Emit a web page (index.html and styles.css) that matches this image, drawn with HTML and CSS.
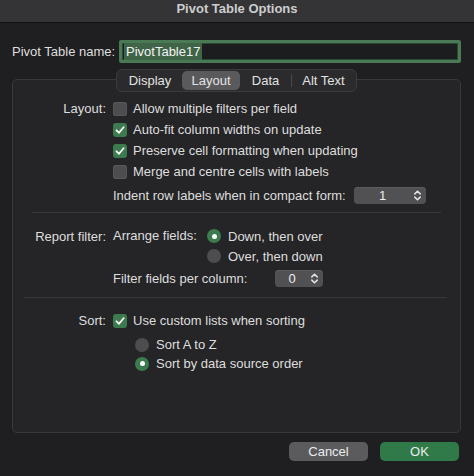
FILE: index.html
```html
<!DOCTYPE html>
<html>
    <head>
        <title>Pivot Table Options</title>
        <link rel="stylesheet" href="styles.css">
    </head>

    <body>

        <div class="window">

            <div class="titlebar">Pivot Table Options</div>

            <div class="content">

                <div class="name_row">
                    <label for="pivot_name" class="name_label">Pivot Table name:</label>
                    <div class="name_input"><span class="selected_text">PivotTable17</span></div>
                </div>

                <div class="group">

                    <div class="tabs">
                        <span class="tab">Display</span>
                        <span class="tab active">Layout</span>
                        <span class="tab">Data</span>
                        <span class="tab divided">Alt Text</span>
                    </div>

                    <div class="section layout_section">
                        <div class="section_label">Layout:</div>
                        <div class="section_body">
                            <div class="row"><span class="checkbox"></span>Allow multiple filters per field</div>
                            <div class="row"><span class="checkbox checked"><svg viewBox="0 0 14 14"><path d="M3.5 7.3 L6 9.8 L10.6 4.2"/></svg></span>Auto-fit column widths on update</div>
                            <div class="row"><span class="checkbox checked"><svg viewBox="0 0 14 14"><path d="M3.5 7.3 L6 9.8 L10.6 4.2"/></svg></span>Preserve cell formatting when updating</div>
                            <div class="row"><span class="checkbox"></span>Merge and centre cells with labels</div>
                            <div class="row indent_row">
                                <span class="field_text">Indent row labels when in compact form:</span>
                                <span class="stepper wide"><span class="stepper_value">1</span><svg class="chevrons" viewBox="0 0 8 12"><path d="M1.5 4.5 L4 2 L6.5 4.5 M1.5 7.5 L4 10 L6.5 7.5"/></svg></span>
                            </div>
                        </div>
                    </div>

                    <div class="separator first"></div>

                    <div class="section filter_section">
                        <div class="section_label">Report filter:</div>
                        <div class="section_body">
                            <div class="arrange">
                                <span class="arrange_label">Arrange fields:</span>
                                <div class="radio_list">
                                    <div class="radio_row"><span class="radio on"></span>Down, then over</div>
                                    <div class="radio_row"><span class="radio"></span>Over, then down</div>
                                </div>
                            </div>
                            <div class="row per_column">
                                <span class="field_text per_column_text">Filter fields per column:</span>
                                <span class="stepper narrow"><span class="stepper_value">0</span><svg class="chevrons" viewBox="0 0 8 12"><path d="M1.5 4.5 L4 2 L6.5 4.5 M1.5 7.5 L4 10 L6.5 7.5"/></svg></span>
                            </div>
                        </div>
                    </div>

                    <div class="separator second"></div>

                    <div class="section sort_section">
                        <div class="section_label">Sort:</div>
                        <div class="section_body">
                            <div class="row"><span class="checkbox checked"><svg viewBox="0 0 14 14"><path d="M3.5 7.3 L6 9.8 L10.6 4.2"/></svg></span>Use custom lists when sorting</div>
                            <div class="sort_options">
                                <div class="radio_row"><span class="radio"></span>Sort A to Z</div>
                                <div class="radio_row"><span class="radio on"></span>Sort by data source order</div>
                            </div>
                        </div>
                    </div>

                </div>

                <div class="buttons">
                    <button type="button" class="button cancel">Cancel</button>
                    <button type="button" class="button ok">OK</button>
                </div>

            </div>

        </div>

    </body>
</html>
```

FILE: styles.css
```css
html, body {
    margin: 0;
    padding: 0;
    background-color: #1f1f21;
}

body {
    font-family: "Liberation Sans", Arial, sans-serif;
    font-size: 13px;
    color: #dedede;
}

.window {
    width: 474px;
    height: 476px;
    overflow: hidden;
}

.titlebar {
    height: 22px;
    line-height: 18px;
    text-align: center;
    font-weight: bold;
    color: #cdcdcd;
    background-color: #343436;
    border-bottom: 1px solid #121213;
}

.content {
    padding: 0 13px 0 12px;
}

/* name field */

.name_row {
    display: flex;
    align-items: center;
    margin-top: 17px;
    height: 23px;
}

.name_label {
    width: 107px;
}

.name_input {
    flex: 1;
    height: 17px;
    line-height: 17px;
    padding-left: 2px;
    background-color: #1c1d1e;
    border: 3px solid #4a7955;
    border-radius: 2px;
    box-shadow: inset 0 0 0 1px #2c4a33;
}

.selected_text {
    display: inline-block;
    padding: 0 2px;
    background-color: #3f6448;
    color: #f2f2f2;
}

/* group box with tabs */

.group {
    margin-top: 16px;
    height: 352px;
    background-color: #252527;
    border: 1px solid #39393b;
    border-radius: 5px;
}

.tabs {
    display: flex;
    width: 237px;
    height: 19px;
    margin: -11px auto 0 auto;
    padding: 1px;
    background-color: #2b2b2d;
    border: 1px solid #3b3b3d;
    border-radius: 6px;
}

.tab {
    flex: 1;
    text-align: center;
    line-height: 19px;
    border-radius: 5px;
    color: #e2e2e2;
}

.tab:nth-child(1) { flex: 0 0 64px; }
.tab:nth-child(2) { flex: 0 0 58px; }
.tab:nth-child(3) { flex: 0 0 51px; }

.tab.active {
    background-color: #5a5a5d;
}

.tab.divided {
    border-left: 1px solid #48484a;
    border-radius: 0 5px 5px 0;
    height: 13px;
    line-height: 13px;
    margin-top: 3px;
}

/* sections */

.section {
    display: grid;
    grid-template-columns: 93px 1fr;
    column-gap: 7px;
}

.section_label {
    text-align: right;
    line-height: 21px;
}

.layout_section {
    margin-top: 6px;
}

.row {
    display: flex;
    align-items: center;
    height: 21px;
}

.checkbox {
    width: 14px;
    height: 14px;
    margin-right: 6px;
    border-radius: 3px;
    background-color: #4d4d50;
    box-shadow: inset 0 0 0 1px #58585b;
    flex: none;
    display: flex;
}

.checkbox.checked {
    background-color: #3c7b4e;
    box-shadow: none;
}

.checkbox svg {
    width: 14px;
    height: 14px;
    fill: none;
    stroke: #ffffff;
    stroke-width: 1.8;
    stroke-linecap: round;
    stroke-linejoin: round;
}

.indent_row {
    margin-top: 3px;
}

.field_text {
    margin-right: 8px;
}

.stepper {
    position: relative;
    height: 17px;
    line-height: 17px;
    background-color: #515154;
    border-radius: 4px;
    box-shadow: inset 0 1px 0 #5d5d60;
}

.stepper.wide {
    width: 72px;
}

.stepper.narrow {
    width: 48px;
}

.stepper_value {
    display: block;
    text-align: center;
    padding-right: 14px;
    color: #ededed;
}

.chevrons {
    position: absolute;
    right: 4px;
    top: 2px;
    width: 9px;
    height: 13px;
    fill: none;
    stroke: #e4e4e4;
    stroke-width: 1.4;
    stroke-linecap: round;
    stroke-linejoin: round;
}

.separator {
    height: 1px;
    background-color: #38383a;
}

.separator.first {
    margin: 6px 19px 13px 19px;
}

.separator.second {
    margin: 8px 13px 12px 11px;
}

.arrange {
    display: flex;
}

.arrange_label {
    width: 94px;
    line-height: 20px;
}

.radio_row {
    display: flex;
    align-items: center;
    height: 20px;
}

.radio {
    width: 14px;
    height: 14px;
    margin-right: 7px;
    border-radius: 50%;
    background-color: #4d4d50;
    flex: none;
    display: flex;
    align-items: center;
    justify-content: center;
}

.radio.on {
    background-color: #3c7b4e;
}

.radio.on::after {
    content: "";
    width: 5px;
    height: 5px;
    border-radius: 50%;
    background-color: #ffffff;
}

.per_column {
    margin-top: 2px;
}

.per_column_text {
    width: 162px;
    margin-right: 0;
}

.sort_options {
    margin-top: 4px;
    margin-left: 22px;
}

.sort_options .radio_row {
    height: 19px;
}

/* buttons */

.buttons {
    display: flex;
    justify-content: flex-end;
    margin-top: 9px;
    gap: 12px;
    padding-right: 2px;
}

.button {
    width: 79px;
    height: 19px;
    padding: 0;
    border: none;
    border-radius: 5px;
    font-family: "Liberation Sans", Arial, sans-serif;
    font-size: 13px;
    color: #ececec;
}

.button.cancel {
    background-color: #5b5b5e;
}

.button.ok {
    background-color: #2f7a48;
}
```
